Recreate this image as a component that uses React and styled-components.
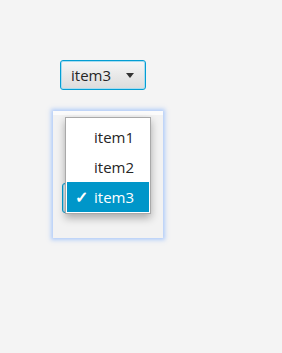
import styled, { createGlobalStyle } from "styled-components"

const Global = createGlobalStyle`
  html, body {
    margin: 0;
    padding: 0;
    background: #f4f4f4;
  }
  body {
    font-family: "Open Sans", "Noto Sans", sans-serif;
  }
`

const Page = styled.div`
  width: 282px;
  height: 353px;
  background: #f4f4f4;
  display: flex;
  flex-direction: column;
  align-items: flex-start;
  padding: 60px 0 0 53px;
  box-sizing: border-box;
`

const Combo = styled.div`
  width: 86px;
  height: 30px;
  box-sizing: border-box;
  margin-left: ${p => p.$offset || 0}px;
  border: 1px solid #039ed3;
  border-radius: 3px;
  box-shadow: inset 0 0 0 1px #a8dcf0;
  background: linear-gradient(#f6f6f6, #dcdcdc);
  display: flex;
  align-items: center;
  padding: 0 10px 0 10px;
  font-size: 15px;
  color: #262626;
  justify-content: space-between;
`

const Arrow = styled.span`
  width: 0;
  height: 0;
  border-left: 4.5px solid transparent;
  border-right: 4.5px solid transparent;
  border-top: 5px solid #333;
  margin-top: 1px;
  margin-right: 1px;
`

const Window = styled.div`
  position: relative;
  margin-top: 21px;
  width: 110px;
  height: 127px;
  box-sizing: border-box;
  background: linear-gradient(#fbfbfb 0 4px, #f2f2f2 4px);
  box-shadow: 0 0 4px 2px rgba(110, 165, 255, 0.5);
  padding-top: 72px;
`

const HiddenCombo = styled(Combo)`
  width: 60px;
  margin-left: 9px;
`

const Popup = styled.div`
  position: absolute;
  left: 12px;
  top: 6px;
  width: 86px;
  box-sizing: border-box;
  background: #fff;
  border: 1px solid #a9a9a9;
  padding: 4px 1px 1px;
  box-shadow: 0 4px 8px rgba(0, 0, 0, 0.3);
`

const Item = styled.div`
  height: 30px;
  display: flex;
  align-items: center;
  padding-left: 8px;
  font-size: 15px;
  color: ${p => (p.$selected ? "#fff" : "#262626")};
  background: ${p => (p.$selected ? "#0096c9" : "transparent")};
`

const Check = styled.span`
  width: 19px;
  font-size: 16px;
  font-weight: 600;
`

export default function App() {
  const items = ["item1", "item2", "item3"]
  return (
    <>
      <Global />
      <Page>
        <Combo $offset={7}>
          <span>item3</span>
          <Arrow />
        </Combo>
        <Window>
          <HiddenCombo />
          <Popup>
            {items.map(it => (
              <Item key={it} $selected={it === "item3"}>
                <Check>{it === "item3" ? "✓" : ""}</Check>
                {it}
              </Item>
            ))}
          </Popup>
        </Window>
      </Page>
    </>
  )
}
